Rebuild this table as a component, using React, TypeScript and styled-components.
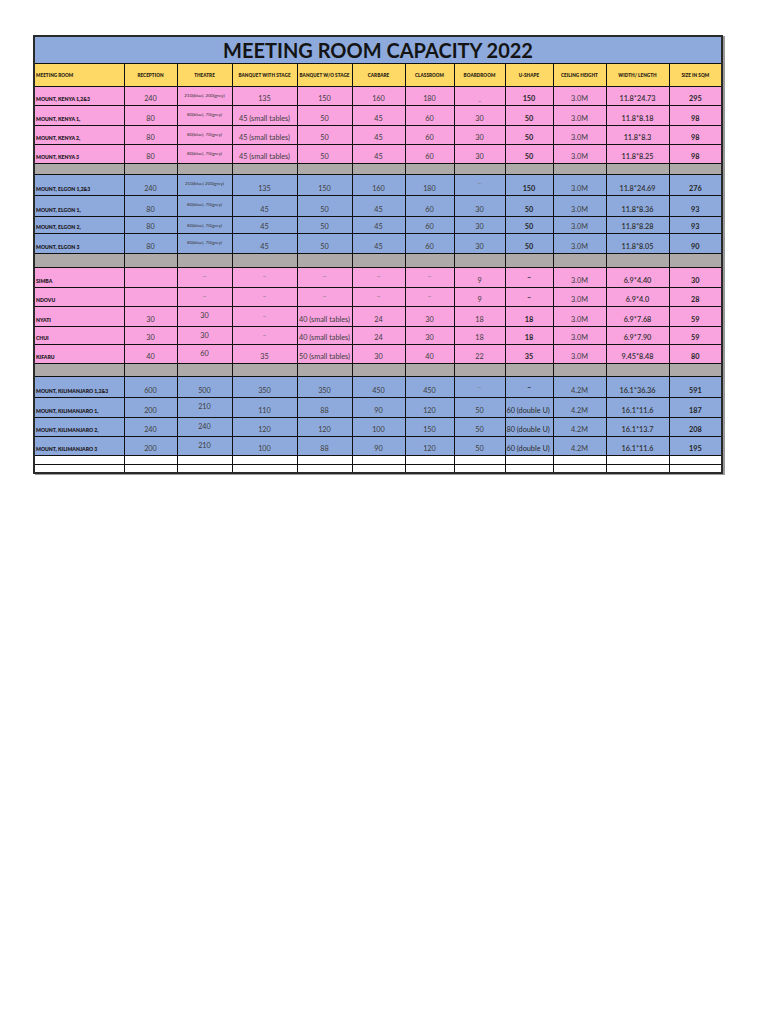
import React from "react";
import styled, { createGlobalStyle, css } from "styled-components";

const GlobalStyle = createGlobalStyle`
  html, body {
    margin: 0;
    padding: 0;
    background: #ffffff;
  }
  body {
    font-family: Lato, "Liberation Sans", sans-serif;
  }
`;

type TBand = "pink" | "blue" | "grey" | "white";
type TAlign = "top" | "mid" | "bottom";
type TKind = "num" | "bold" | "semi" | "note" | "dash" | "left";

interface ICell {
  t: string;
  v?: TAlign;
  k?: TKind;
}

type TCell = string | ICell;

interface IRow {
  band: TBand;
  h: number;
  cells: TCell[];
}

const BAND_COLORS: Record<TBand, string> = {
  pink: "#f9a3df",
  blue: "#8eaadc",
  grey: "#aeaaaa",
  white: "#ffffff",
};

const COLUMN_WIDTHS = [90, 53, 55, 65, 55, 53, 49, 51, 48, 53, 63, 53];

const HEADERS = [
  "MEETING ROOM",
  "RECEPTION",
  "THEATRE",
  "BANQUET WITH STAGE",
  "BANQUET W/O STAGE",
  "CARBARE",
  "CLASSROOM",
  "BOARDROOM",
  "U-SHAPE",
  "CEILING HEIGHT",
  "WIDTH/ LENGTH",
  "SIZE IN SQM",
];

// columns that are printed bold in the sheet
const BOLD_COLS = [8, 11];
const SEMI_COLS = [10];

const note = (t: string): ICell => ({ t, v: "top", k: "note" });
const top = (t: string): ICell => ({ t, v: "top" });
const dash = (v: TAlign = "top"): ICell => ({ t: "–", v, k: "dash" });
const bigDash = (v: TAlign = "mid"): ICell => ({ t: "–", v, k: "bold" });

const empty = (band: TBand, h: number): IRow => ({
  band,
  h,
  cells: Array(12).fill(""),
});

const ROWS: IRow[] = [
  {
    band: "pink",
    h: 19,
    cells: ["MOUNT, KENYA 1,2&3", "240", note("210(blue), 200(grey)"), "135", "150", "160", "180", { t: "_", k: "dash" }, "150", "3.0M", "11.8*24.73", "295"],
  },
  {
    band: "pink",
    h: 20,
    cells: ["MOUNT, KENYA 1,", "80", note("80(blue), 70(grey)"), "45 (small tables)", "50", "45", "60", "30", "50", "3.0M", "11.8*8.18", "98"],
  },
  {
    band: "pink",
    h: 19,
    cells: ["MOUNT, KENYA 2,", "80", note("80(blue), 70(grey)"), "45 (small tables)", "50", "45", "60", "30", "50", "3.0M", "11.8*8.3", "98"],
  },
  {
    band: "pink",
    h: 19,
    cells: ["MOUNT, KENYA 3", "80", note("80(blue), 70(grey)"), "45 (small tables)", "50", "45", "60", "30", "50", "3.0M", "11.8*8.25", "98"],
  },
  empty("grey", 11),
  {
    band: "blue",
    h: 21,
    cells: ["MOUNT, ELGON 1,2&3", "240", note("210(blue) 200(grey)"), "135", "150", "160", "180", dash("top"), "150", "3.0M", "11.8*24.69", "276"],
  },
  {
    band: "blue",
    h: 21,
    cells: ["MOUNT, ELGON 1,", "80", note("80(blue), 70(grey)"), "45", "50", "45", "60", "30", "50", "3.0M", "11.8*8.36", "93"],
  },
  {
    band: "blue",
    h: 17,
    cells: ["MOUNT, ELGON 2,", "80", note("80(blue), 70(grey)"), "45", "50", "45", "60", "30", "50", "3.0M", "11.8*8.28", "93"],
  },
  {
    band: "blue",
    h: 20,
    cells: ["MOUNT, ELGON 3", "80", note("80(blue), 70(grey)"), "45", "50", "45", "60", "30", "50", "3.0M", "11.8*8.05", "90"],
  },
  empty("grey", 14),
  {
    band: "pink",
    h: 20,
    cells: ["SIMBA", "", dash(), dash(), dash(), dash(), dash(), "9", bigDash(), "3.0M", "6.9*4.40", "30"],
  },
  {
    band: "pink",
    h: 19,
    cells: ["NDOVU", "", dash(), dash(), dash(), dash(), dash(), "9", bigDash(), "3.0M", "6.9*4.0", "28"],
  },
  {
    band: "pink",
    h: 20,
    cells: ["NYATI", "30", top("30"), dash("mid"), "40 (small tables)", "24", "30", "18", "18", "3.0M", "6.9*7.68", "59"],
  },
  {
    band: "pink",
    h: 18,
    cells: ["CHUI", "30", top("30"), dash("mid"), "40 (small tables)", "24", "30", "18", "18", "3.0M", "6.9*7.90", "59"],
  },
  {
    band: "pink",
    h: 19,
    cells: ["KIFARU", "40", top("60"), "35", "50 (small tables)", "30", "40", "22", "35", "3.0M", "9.45*8.48", "80"],
  },
  empty("grey", 13),
  {
    band: "blue",
    h: 21,
    cells: ["MOUNT, KILIMANJARO 1,2&3", "600", "500", "350", "350", "450", "450", dash("mid"), bigDash("mid"), "4.2M", "16.1*36.36", "591"],
  },
  {
    band: "blue",
    h: 20,
    cells: ["MOUNT, KILIMANJARO 1,", "200", top("210"), "110", "88", "90", "120", "50", { t: "60 (double U)", k: "left" }, "4.2M", "16.1*11.6", "187"],
  },
  {
    band: "blue",
    h: 19,
    cells: ["MOUNT, KILIMANJARO 2,", "240", top("240"), "120", "120", "100", "150", "50", { t: "80 (double U)", k: "left" }, "4.2M", "16.1*13.7", "208"],
  },
  {
    band: "blue",
    h: 19,
    cells: ["MOUNT, KILIMANJARO 3", "200", top("210"), "100", "88", "90", "120", "50", { t: "60 (double U)", k: "left" }, "4.2M", "16.1*11.6", "195"],
  },
  empty("white", 9),
  empty("white", 8),
];

const StyledPage = styled.div`
  padding: 35px 0 0 33px;
  min-height: 1024px;
  box-sizing: border-box;
`;

const StyledSheet = styled.table`
  border-collapse: collapse;
  table-layout: fixed;
  width: 690px;
  border: 2px solid #2a2a2a;
  box-shadow: 2px 1px 0 #9a9a9a;
`;

const StyledTitle = styled.th`
  height: 26px;
  padding: 0;
  background: #8eaadc;
  border-bottom: 1px solid #111;
  font-family: Lato, "Liberation Sans", sans-serif;
  font-size: 20px;
  font-weight: 700;
  color: #141414;
  text-align: center;
  vertical-align: middle;
  line-height: 26px;
`;

const StyledHeaderRow = styled.tr`
  height: 23px;
  background: #ffd966;
`;

const StyledHeadCell = styled.th<{ $first?: boolean }>`
  border: 1px solid #111;
  padding: 0 1px;
  font-size: 4.6px;
  font-weight: 800;
  color: #2d2616;
  text-align: ${(p) => (p.$first ? "left" : "center")};
  vertical-align: middle;
  white-space: nowrap;
  overflow: hidden;
  letter-spacing: 0.05px;
`;

const StyledRow = styled.tr<{ $band: TBand; $h: number }>`
  height: ${(p) => p.$h}px;
  background: ${(p) => BAND_COLORS[p.$band]};
`;

const StyledName = styled.td`
  border: 1px solid #111;
  padding: 0 0 2px 1px;
  font-size: 5.1px;
  font-weight: 800;
  color: #1e1a1e;
  text-align: left;
  vertical-align: bottom;
  white-space: nowrap;
  overflow: hidden;
  line-height: 8px;
`;

const kindStyles: Record<TKind, ReturnType<typeof css>> = {
  num: css`
    font-size: 7.3px;
    color: #404040;
  `,
  bold: css`
    font-size: 7.3px;
    font-weight: 700;
    color: #262626;
  `,
  semi: css`
    font-size: 7.3px;
    font-weight: 600;
    color: #303030;
  `,
  note: css`
    font-size: 4.6px;
    color: #333;
  `,
  dash: css`
    font-size: 7px;
    color: #7e7e7e;
  `,
  left: css`
    font-size: 7.3px;
    color: #2a2a2a;
    text-align: left;
  `,
};

const alignStyles: Record<TAlign, ReturnType<typeof css>> = {
  top: css`
    vertical-align: top;
    padding-top: 4px;
  `,
  mid: css`
    vertical-align: middle;
  `,
  bottom: css`
    vertical-align: bottom;
    padding-bottom: 2px;
  `,
};

const StyledValue = styled.td<{ $kind: TKind; $align: TAlign }>`
  border: 1px solid #111;
  padding: 0 1px;
  text-align: center;
  white-space: nowrap;
  overflow: hidden;
  line-height: 9px;
  ${(p) => kindStyles[p.$kind]}
  ${(p) => alignStyles[p.$align]}
`;

const toCell = (cell: TCell, col: number): ICell => {
  const base: ICell = typeof cell === "string" ? { t: cell } : cell;
  let kind: TKind = base.k || "num";
  if (!base.k && BOLD_COLS.includes(col)) kind = "bold";
  if (!base.k && SEMI_COLS.includes(col)) kind = "semi";
  return { t: base.t, v: base.v || "bottom", k: kind };
};

const App = () => {
  return (
    <StyledPage>
      <GlobalStyle />
      <StyledSheet>
        <colgroup>
          {COLUMN_WIDTHS.map((w, i) => (
            <col key={i} style={{ width: w }} />
          ))}
        </colgroup>
        <thead>
          <tr>
            <StyledTitle colSpan={12}>MEETING ROOM CAPACITY 2022</StyledTitle>
          </tr>
          <StyledHeaderRow>
            {HEADERS.map((label, i) => (
              <StyledHeadCell key={label} $first={i === 0}>
                {label}
              </StyledHeadCell>
            ))}
          </StyledHeaderRow>
        </thead>
        <tbody>
          {ROWS.map((row, r) => (
            <StyledRow key={r} $band={row.band} $h={row.h}>
              {row.cells.map((raw, c) => {
                if (c === 0) {
                  return <StyledName key={c}>{raw as string}</StyledName>;
                }
                const cell = toCell(raw, c);
                return (
                  <StyledValue key={c} $kind={cell.k as TKind} $align={cell.v as TAlign}>
                    {cell.t}
                  </StyledValue>
                );
              })}
            </StyledRow>
          ))}
        </tbody>
      </StyledSheet>
    </StyledPage>
  );
};

export default App;
